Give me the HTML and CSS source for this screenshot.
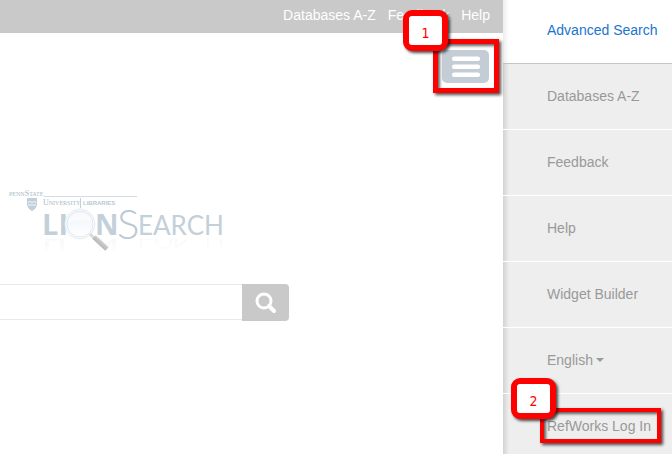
FILE: index.html
```html
<!DOCTYPE html>
<html lang="en">
<head>
    <meta charset="UTF-8">
    <meta name="viewport" content="width=device-width, initial-scale=1.0">
    <title>LionSearch</title>
    <link rel="stylesheet" href="styles.css">
</head>
<body>
    <div class="page">
        <nav class="topbar">
            <a href="#">Databases A-Z</a>
            <a href="#">Feedback</a>
            <a href="#">Help</a>
        </nav>
        <div class="toolbar">
            <div class="marked">
                <button class="menu-button" type="button" aria-label="Menu">
                    <svg width="28" height="21" viewBox="0 0 28 21">
                        <g fill="#fff">
                            <rect x="0" y="0.500" width="28" height="4.500" rx="2"/>
                            <rect x="0" y="8.500" width="28" height="4.500" rx="2"/>
                            <rect x="0" y="16.500" width="28" height="4.500" rx="2"/>
                        </g>
                    </svg>
                </button>
                <div class="frame frame-menu"><span class="badge">1</span></div>
            </div>
        </div>
        <svg class="logo" width="218" height="70" viewBox="8 186 218 70" role="img" aria-label="Penn State University Libraries LionSearch">
            <defs>
                <linearGradient id="lens" x1="0" y1="0" x2="0" y2="1">
                    <stop offset="0" stop-color="#edf3f9"/>
                    <stop offset="1" stop-color="#ffffff"/>
                </linearGradient>
                <linearGradient id="handle" x1="0" y1="1" x2="1" y2="0">
                    <stop offset="0.3" stop-color="#b0b0b0"/>
                    <stop offset="0.7" stop-color="#d6d6d6"/>
                </linearGradient>
                <linearGradient id="fade" x1="0" y1="0" x2="0" y2="1">
                    <stop offset="0" stop-color="#f6f8fa"/>
                    <stop offset="1" stop-color="#fff"/>
                </linearGradient>
            </defs>
            <!-- Penn State mark -->
            <text class="logo-small" x="9" y="196">PENN<tspan class="logo-initial">S</tspan>TATE</text>
            <path d="M44 196.500H137" stroke="#d3dce4"/>
            <path d="M27 198H37V205Q36 209 32 211Q28 209 27 205Z" fill="#c3d0da"/>
            <path d="M28 202.500L30 201.500L32 202.500L35 201.500L36 203M28 205H36" fill="none" stroke="#f2f5f8"/>
            <text class="logo-small" x="43" y="205"><tspan class="logo-initial">U</tspan>NIVERSITY</text>
            <path d="M80.500 198V208" stroke="#c3d0da"/>
            <text class="logo-libraries" x="83" y="205">LIBRARIES</text>
            <!-- reflection -->
            <g fill="url(#fade)">
                <rect x="45" y="239" width="13" height="3"/>
                <rect x="45" y="242" width="4" height="11"/>
                <rect x="60" y="239" width="4" height="14"/>
                <path d="M98 239H102V246L112 239H116V253H112V243L102 252H98Z"/>
                <rect x="140" y="239" width="12" height="2"/>
                <rect x="140" y="241" width="2" height="11"/>
                <path d="M154 239H156L160 247H168L171 239H173L167 252H161Z"/>
                <path d="M175 239H177V245L186 239H188L180 247V252H175Z"/>
                <rect x="207" y="239" width="2" height="13"/>
                <rect x="220" y="239" width="2" height="13"/>
            </g>
            <text class="logo-bold" x="42" y="235">LI</text>
            <text class="logo-bold" x="95" y="235">N</text>
            <text class="logo-cap" x="117" y="239">S</text>
            <text class="logo-light" x="138" y="235">EARCH</text>
            <!-- magnifier -->
            <circle cx="80" cy="224" r="15" fill="#fafbfc" stroke="#e6ecf0"/>
            <circle cx="80" cy="224" r="13" fill="url(#lens)" stroke="#dfe9f2"/>
            <path d="M68 223Q69 212 81 212Q91 213 92 222Q80 218 68 223Z" fill="#fff" opacity="0.5"/>
            <path d="M90 234L94 238" stroke="#dadada" stroke-width="3"/>
            <path d="M94 237L107 249" stroke="url(#handle)" stroke-width="5"/>
        </svg>
        <form class="search" onsubmit="return false">
            <input class="search-input" type="text" aria-label="Search">
            <button class="search-button" type="submit" aria-label="Search">
                <svg width="24" height="24" viewBox="0 0 24 24" fill="none" stroke="#fff">
                    <circle cx="10" cy="10" r="7" stroke-width="3"/>
                    <path d="M15 15L20 20" stroke-width="4" stroke-linecap="round"/>
                </svg>
            </button>
        </form>
    </div>

    <aside class="sidebar">
        <ul class="menu">
            <li class="menu-item current"><a href="#">Advanced Search</a></li>
            <li class="menu-item"><a href="#">Databases A-Z</a></li>
            <li class="menu-item"><a href="#">Feedback</a></li>
            <li class="menu-item"><a href="#">Help</a></li>
            <li class="menu-item"><a href="#">Widget Builder</a></li>
            <li class="menu-item">
                <select class="language" aria-label="Language">
                    <option>English</option>
                </select>
                <span class="caret"></span>
            </li>
            <li class="menu-item">
                <div class="marked">
                    <a href="#">RefWorks Log In</a>
                    <div class="frame frame-login"><span class="badge">2</span></div>
                </div>
            </li>
        </ul>
    </aside>
</body>
</html>
```
FILE: styles.css
```css
* {
    box-sizing: border-box;
}
body {
    margin: 0;
    display: flex;
    height: 100vh;
    overflow: hidden;
    background: #fff;
    font-family: "Liberation Sans", Arial, sans-serif;
    font-size: 14px;
}
a {
    color: inherit;
    text-decoration: none;
}
button {
    border: none;
    padding: 0;
    cursor: pointer;
}
.page {
    flex: 1;
    min-width: 0;
}
.topbar {
    display: flex;
    justify-content: flex-end;
    gap: 12px;
    height: 33px;
    padding: 0 13px;
    line-height: 30px;
    background: #c9c9c9;
    color: #fff;
}
.toolbar {
    display: flex;
    justify-content: flex-end;
    padding: 17px 14px 0;
}
.marked {
    position: relative;
}
.menu-button {
    display: flex;
    align-items: center;
    justify-content: center;
    width: 47px;
    height: 33px;
    border-radius: 5px;
    background: #c4cdd6;
}
.frame {
    position: absolute;
    border: 5px solid #f00;
    box-shadow: 2px 2px 3px rgba(0, 0, 0, 0.7), inset 2px 2px 3px rgba(0, 0, 0, 0.6);
    pointer-events: none;
}
.frame-menu {
    inset: -11px -10px -10px -9px;
}
.frame-login {
    inset: -10px -10px -9px -7px;
    border-width: 4px;
}
.badge {
    position: absolute;
    right: 100%;
    bottom: 100%;
    width: 45px;
    height: 41px;
    margin: 0 -12px -7px 0;
    border: 6px solid #f00;
    border-radius: 9px;
    background: #fff;
    box-shadow: 2px 2px 3px rgba(0, 0, 0, 0.7);
    color: #f00;
    font-family: "DejaVu Sans Condensed", "DejaVu Sans", sans-serif;
    font-size: 14px;
    line-height: 34px;
    text-align: center;
}
.frame-menu .badge {
    margin-right: -10px;
}
.logo {
    display: block;
    margin: 103px 0 0 8px;
}
.logo-small {
    font-family: "Liberation Serif", serif;
    font-size: 6px;
    fill: #a9bac7;
}
.logo-initial {
    font-size: 8px;
}
.logo-libraries {
    font-family: "Liberation Sans", sans-serif;
    font-size: 6px;
    font-weight: bold;
    fill: #b8c7d3;
}
.logo-bold {
    font-family: "Open Sans", sans-serif;
    font-size: 29px;
    font-weight: bold;
    fill: #c3d0da;
}
.logo-light {
    font-family: Lato, sans-serif;
    font-size: 26px;
    fill: #c3d0da;
}
.logo-cap {
    font-family: Lato, sans-serif;
    font-size: 42px;
    font-weight: 300;
    fill: #b9c8d3;
}
.search {
    display: flex;
    width: 289px;
    margin-top: 28px;
}
.search-input {
    flex: 1;
    min-width: 0;
    height: 36px;
    border: 1px solid #e8e8e8;
    border-width: 1px 0;
    padding: 0 12px;
    font: inherit;
}
.search-button {
    display: flex;
    align-items: center;
    justify-content: center;
    width: 47px;
    height: 37px;
    border-radius: 0 4px 4px 0;
    background: #c9c9c9;
}
.sidebar {
    width: 169px;
    background: #eee;
}
.menu {
    margin: 0;
    padding: 0;
    list-style: none;
}
.menu-item {
    display: flex;
    align-items: center;
    height: 66px;
    padding: 0 0 2px 44px;
    border-bottom: 1px solid #fff;
    background: linear-gradient(to right, #d2d2d2, #eee 6px);
    color: #999;
    line-height: 16px;
    white-space: nowrap;
}
.menu-item.current {
    height: 64px;
    padding-bottom: 3px;
    border-bottom-color: #c4c4c4;
    background: linear-gradient(to right, #eee, #fff 6px);
    color: #1a75cf;
}
.language {
    appearance: none;
    border: none;
    padding: 0;
    background: none;
    color: inherit;
    font: inherit;
}
.caret {
    margin-left: 3px;
    border: 4px solid transparent;
    border-top-color: #999;
    border-bottom: 0;
}
```
